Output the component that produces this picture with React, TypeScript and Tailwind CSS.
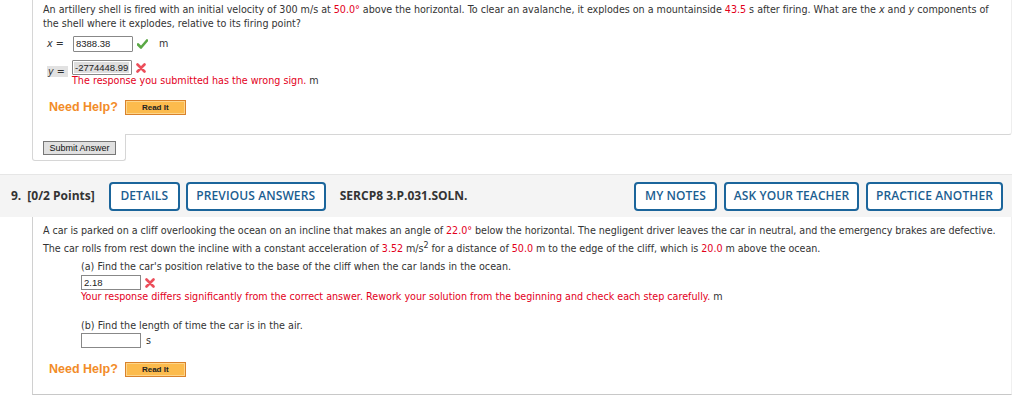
import React from "react";

const R = ({ children }: { children: React.ReactNode }) => (
  <span className="text-[#e3001b]">{children}</span>
);

const Check = () => (
  <svg width="11" height="10" viewBox="0 0 11 10" className="inline-block">
    <path d="M1 5.5 L4 8.5 L10 1.5" fill="none" stroke="#5aa845" strokeWidth="2.6" strokeLinecap="round" strokeLinejoin="round" />
  </svg>
);

const Cross = () => (
  <svg width="10" height="10" viewBox="0 0 10 10" className="inline-block">
    <path d="M1.5 1.5 L8.5 8.5 M8.5 1.5 L1.5 8.5" stroke="#ec4e5a" strokeWidth="2.6" strokeLinecap="round" />
  </svg>
);

const NeedHelp = () => (
  <div className="flex items-center gap-[7px]">
    <span className="font-['Liberation_Sans',sans-serif] font-bold text-[12.5px] text-[#f28c28]">Need Help?</span>
    <button className="w-[61px] h-[15px] bg-[#fcbb4d] border border-[#d9822b] shadow-[inset_0_0_0_1px_#fdd58a] font-['Liberation_Sans',sans-serif] font-bold text-[8px] leading-[13px] text-[#222]">
      Read It
    </button>
  </div>
);

const HBtn = ({ children, w }: { children: React.ReactNode; w: string }) => (
  <button
    className={`${w} h-[29px] border-2 border-[#1b659b] rounded-[4px] bg-white font-['Open_Sans',sans-serif] font-semibold text-[12px] text-[#1b5e91] tracking-[0.1px]`}
  >
    {children}
  </button>
);

export default function App() {
  return (
    <div className="w-[1024px] h-[406px] bg-white overflow-hidden text-[#333] font-['DejaVu_Sans',Verdana,sans-serif] text-[9.6px]">
      {/* top panel */}
      <div className="ml-[32px] w-[980px] h-[135px] border-l border-r border-b border-[#d6d6d6] border-r-[#eeeeee] rounded-br-[3px] pl-[10px] pt-[3px]">
        <p className="leading-[14px] tracking-[-0.02px] whitespace-nowrap">
          An artillery shell is fired with an initial velocity of 300 m/s at <R>50.0°</R> above the horizontal. To clear an avalanche, it explodes on a mountainside <R>43.5</R> s after firing. What are the <i>x</i> and <i>y</i> components of
          <br />
          the shell where it explodes, relative to its firing point?
        </p>
        <div className="flex items-center mt-[5px] h-[16px]">
          <span className="ml-[4px] w-[26px]">
            <i>x</i> =
          </span>
          <div className="w-[60px] h-[16px] border border-[#888] rounded-[1px] px-[2px] leading-[14px] font-['Liberation_Sans',sans-serif] text-[9.5px] text-[#222]">
            8388.38
          </div>
          <span className="ml-[4px] mt-[1px]"><Check /></span>
          <span className="ml-[11px]">m</span>
        </div>
        <div className="flex mt-[7px]">
          <span className="ml-[4px] mt-[7px] h-[11px] w-[21px] bg-[#e2e2e2] leading-[11px] pl-[1px]">
            <i>y</i> =
          </span>
          <div className="ml-[4px]">
            <div className="flex items-center">
              <div className="w-[60px] h-[15px] border border-[#888] rounded-[1px] p-[1px] flex">
                <span className="bg-[#dedede] px-[1px] leading-[11px] font-['Liberation_Sans',sans-serif] text-[9.5px] text-[#222]">-2774448.99</span>
              </div>
              <span className="ml-[4px] mt-[2px]"><Cross /></span>
            </div>
            <div className="leading-[12px] mt-[0px]">
              <R>The response you submitted has the wrong sign.</R> m
            </div>
          </div>
        </div>
        <div className="mt-[11px] ml-[6px]">
          <NeedHelp />
        </div>
      </div>
      <div className="ml-[32px] -mt-px w-[94px] h-[27px] bg-white border-l border-r border-b border-[#d6d6d6] rounded-b-[3px] pl-[10px] pt-[7px]">
        <button className="h-[14px] w-[73px] bg-[#e0e0e0] border border-[#777] font-['Liberation_Sans',sans-serif] text-[9px] leading-[12px] text-[#111]">
          Submit Answer
        </button>
      </div>

      {/* header bar */}
      <div className="mt-[13px] w-[1012px] h-[43px] bg-[#f4f4f4] border-t border-[#e6e6e6] flex items-center font-['Open_Sans',sans-serif] text-[12px]">
        <span className="ml-[11px] font-bold text-[#333]">9.</span>
        <span className="ml-[6px] font-bold text-[#333]">[0/2 Points]</span>
        <div className="ml-[14px] flex gap-[6px]">
          <HBtn w="w-[71px]">DETAILS</HBtn>
          <HBtn w="w-[140px]">PREVIOUS ANSWERS</HBtn>
        </div>
        <span className="ml-[14px] font-bold text-[#333]">SERCP8 3.P.031.SOLN.</span>
        <div className="ml-auto mr-[9px] flex gap-[7px]">
          <HBtn w="w-[83px]">MY NOTES</HBtn>
          <HBtn w="w-[135px]">ASK YOUR TEACHER</HBtn>
          <HBtn w="w-[137px]">PRACTICE ANOTHER</HBtn>
        </div>
      </div>

      {/* bottom panel */}
      <div className="ml-[32px] w-[980px] h-[178px] border-l border-r border-b border-[#d0d0d0] border-r-[#f0f0f0] border-b-[#c8c8c8] pl-[10px] pt-[5px]">
        <p className="leading-[18px] whitespace-nowrap tracking-[-0.05px]">
          A car is parked on a cliff overlooking the ocean on an incline that makes an angle of <R>22.0°</R> below the horizontal. The negligent driver leaves the car in neutral, and the emergency brakes are defective.
          <br />
          The car rolls from rest down the incline with a constant acceleration of <R>3.52</R> m/s<sup className="text-[8px] -top-[4px]">2</sup> for a distance of <R>50.0</R> m to the edge of the cliff, which is <R>20.0</R> m above the ocean.
        </p>
        <div className="ml-[38px] mt-[2px]">
          <div className="leading-[14px]">(a) Find the car's position relative to the base of the cliff when the car lands in the ocean.</div>
          <div className="flex items-center mt-[0px]">
            <div className="w-[60px] h-[15px] border border-[#888] px-[2px] leading-[13px] font-['Liberation_Sans',sans-serif] text-[9.5px] text-[#222]">2.18</div>
            <span className="ml-[4px] mt-[2px]"><Cross /></span>
          </div>
          <div className="leading-[14px] mt-[0px]">
            <R>Your response differs significantly from the correct answer. Rework your solution from the beginning and check each step carefully.</R> m
          </div>
          <div className="leading-[14px] mt-[15px]">(b) Find the length of time the car is in the air.</div>
          <div className="flex items-center mt-[0px]">
            <div className="w-[60px] h-[15px] border border-[#888]" />
            <span className="ml-[5px]">s</span>
          </div>
        </div>
        <div className="mt-[12px] ml-[6px]">
          <NeedHelp />
        </div>
      </div>
    </div>
  );
}
